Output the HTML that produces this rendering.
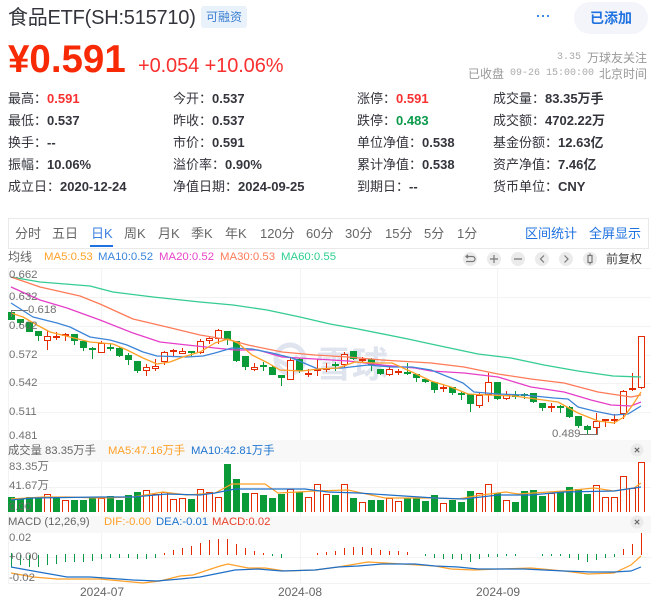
<!DOCTYPE html>
<html><head><meta charset="utf-8"><style>
html,body{margin:0;padding:0;background:#fff}
body{width:651px;height:602px;position:relative;overflow:hidden;font-family:"Liberation Sans","Noto Sans CJK SC",sans-serif;color:#33353c}
.a{position:absolute;white-space:nowrap}
.r{font-size:13px;line-height:18px;color:#33353c}
.r b{font-weight:700}
.red{color:#f93030}.grn{color:#0a9a4a}
.t{font-size:13px;line-height:18px;top:225px;color:#666}
.i{font-size:12px;line-height:16px;color:#999}
.m{font-family:"Liberation Mono",monospace;font-size:10px;color:#aaa}
.ma{top:249px;font-size:11.4px;line-height:16px}
svg{position:absolute;left:0;top:0}
svg text{font-family:"Liberation Sans","Noto Sans CJK SC",sans-serif}
</style></head><body>
<div class="a" style="left:8px;top:5px;font-size:20px;line-height:26px;letter-spacing:-.22px">食品ETF(SH:515710)</div>
<div class="a" style="left:201px;top:6px;width:46px;height:22px;background:#e9f2fb;border-radius:3px;color:#3b7fd0;font-size:12px;line-height:22px;text-align:center">可融资</div>
<div class="a" style="left:8px;top:37px;font-size:38.5px;line-height:46px;font-weight:700;color:#f82a05">¥0.591</div>
<div class="a" style="left:138px;top:53px;font-size:20px;line-height:26px;color:#f93030;letter-spacing:-.1px">+0.054 +10.06%</div>
<div class="a" style="left:574px;top:2px;width:74px;height:32px;border-radius:16px;background:#f3f5fa;color:#1f72e0;font-size:14px;line-height:32px;text-align:center;font-weight:700">已添加</div>
<div class="a i m" style="left:557px;top:50px">3.35</div>
<div class="a i" style="left:587px;top:50px">万球友关注</div>
<div class="a i" style="left:468px;top:66px">已收盘</div>
<div class="a i m" style="left:510px;top:66px">09-26</div>
<div class="a i m" style="left:546px;top:66px">15:00:00</div>
<div class="a i" style="left:599px;top:66px">北京时间</div>

<div class="a r" style="left:8px;top:90px">最高：<b class="red">0.591</b></div>
<div class="a r" style="left:8px;top:112px">最低：<b>0.537</b></div>
<div class="a r" style="left:8px;top:134px">换手：<b>--</b></div>
<div class="a r" style="left:8px;top:156px">振幅：<b>10.06%</b></div>
<div class="a r" style="left:8px;top:178px">成立日：<b>2020-12-24</b></div>
<div class="a r" style="left:173px;top:90px">今开：<b>0.537</b></div>
<div class="a r" style="left:173px;top:112px">昨收：<b>0.537</b></div>
<div class="a r" style="left:173px;top:134px">市价：<b>0.591</b></div>
<div class="a r" style="left:173px;top:156px">溢价率：<b>0.90%</b></div>
<div class="a r" style="left:173px;top:178px">净值日期：<b>2024-09-25</b></div>
<div class="a r" style="left:357px;top:90px">涨停：<b class="red">0.591</b></div>
<div class="a r" style="left:357px;top:112px">跌停：<b class="grn">0.483</b></div>
<div class="a r" style="left:357px;top:134px">单位净值：<b>0.538</b></div>
<div class="a r" style="left:357px;top:156px">累计净值：<b>0.538</b></div>
<div class="a r" style="left:357px;top:178px">到期日：<b>--</b></div>
<div class="a r" style="left:493px;top:90px">成交量：<b>83.35万手</b></div>
<div class="a r" style="left:493px;top:112px">成交额：<b>4702.22万</b></div>
<div class="a r" style="left:493px;top:134px">基金份额：<b>12.63亿</b></div>
<div class="a r" style="left:493px;top:156px">资产净值：<b>7.46亿</b></div>
<div class="a r" style="left:493px;top:178px">货币单位：<b>CNY</b></div>

<div class="a" style="left:8px;top:218px;width:639px;height:29px;border:1px solid #e9e9e9"></div>
<div class="a t" style="left:15px">分时</div><div class="a t" style="left:52px">五日</div>
<div class="a t" style="left:91px;color:#3b7fe0">日K</div>
<div class="a" style="left:90px;top:245px;width:23px;height:2px;background:#1f72e0"></div>
<div class="a t" style="left:124px">周K</div><div class="a t" style="left:158px">月K</div><div class="a t" style="left:191px">季K</div><div class="a t" style="left:225px">年K</div>
<div class="a t" style="left:260px">120分</div><div class="a t" style="left:306px">60分</div><div class="a t" style="left:345px">30分</div><div class="a t" style="left:385px">15分</div><div class="a t" style="left:424px">5分</div><div class="a t" style="left:457px">1分</div>
<div class="a t" style="left:525px;color:#1f72e0">区间统计</div><div class="a t" style="left:589px;color:#1f72e0">全屏显示</div>

<div class="a" style="left:8px;top:249px;font-size:12px;line-height:16px;color:#666">均线</div>
<div class="a ma" style="left:44px;color:#ffa22a">MA5:0.53</div>
<div class="a ma" style="left:98px;color:#3b85dc">MA10:0.52</div>
<div class="a ma" style="left:159px;color:#e845c8">MA20:0.52</div>
<div class="a ma" style="left:220px;color:#ff7b58">MA30:0.53</div>
<div class="a ma" style="left:281px;color:#2fd08f">MA60:0.55</div>
<div class="a" style="left:606px;top:251px;font-size:12px;line-height:16px;color:#444">前复权</div>

<svg width="651" height="602" viewBox="0 0 651 602">
<g fill="#2a7de1"><circle cx="538" cy="16" r="1.1"/><circle cx="543" cy="16" r="1.1"/><circle cx="548" cy="16" r="1.1"/></g>
<g fill="#ebebeb"><circle cx="470" cy="259" r="7"/><circle cx="494" cy="259" r="7"/><circle cx="518" cy="259" r="7"/><circle cx="542" cy="259" r="7"/><circle cx="566" cy="259" r="7"/><circle cx="590" cy="259" r="7"/></g>
<g fill="none" stroke="#777" stroke-width="1.2"><path d="M466 256.5h6.5a2.5 2.5 0 0 1 0 5H466M468 254.8l-2 1.7 2 1.7"/><path d="M490 259h8M494 255v8M514 259h8M544 255.5l-3.5 3.5 3.5 3.5M564.5 255.5l3.5 3.5-3.5 3.5"/><rect x="588" y="255.5" width="4" height="7"/><path d="M590 253.5v2M590 262.5v2"/></g>

<rect x="8" y="440" width="643" height="22" fill="#f8f8f8"/>
<rect x="8" y="516" width="643" height="17" fill="#f8f8f8"/>
<path d="M8.5 268V583M101.5 268V440M300.5 268V440M497.5 268V440M101.5 462V516M300.5 462V516M497.5 462V516M101.5 533V583M300.5 533V583M497.5 533V583M8 268.5H651M8 297.5H651M8 326.5H651M8 355.5H651M8 383.5H651M8 412.5H651M8 487.5H651M8 557.5H651M8 583.5H651" stroke="#f3f3f3" fill="none"/>

<g fill="#dfe4ee" stroke="none"><circle cx="290" cy="359" r="14" fill="none" stroke="#dfe4ee" stroke-width="5"/><path d="M278 358l10 5 8-8 6 4-2 3-4-2-8 8-11-6z"/><text x="316" y="377" font-size="36" font-weight="700">雪球</text></g>

<!-- candles wicks -->
<path fill="none" stroke="#0a9a38" d="M11.5 310V320M20.5 319V325M38.5 331V341M74.5 334V345M83.5 341V351M92.5 347V359M110.5 343V351M119.5 347V357M128.5 353V365M137.5 361V373M191.5 351V356M227.5 331V345M236.5 341V362M245.5 356V370M263.5 362V371M272.5 366V375M281.5 375V386M299.5 358V373M335.5 362V371M353.5 351V360M371.5 358V371M380.5 369V375M407.5 363V375M416.5 374V382M425.5 379V383M434.5 382V393M452.5 387V395M461.5 392V400M470.5 394V412M497.5 382V400M515.5 391V399M524.5 393V399M533.5 393V403M542.5 403V411M560.5 405V413M569.5 406V418M578.5 416V428M587.5 425V434"/>
<path fill="none" stroke="#e32a00" d="M47.5 331V350M56.5 332V340M65.5 333V341M101.5 341V353M146.5 364V376M155.5 359V371M164.5 351V365M173.5 349V356M182.5 348V354M200.5 339V354M209.5 336V344M218.5 329V344M254.5 363V371M290.5 358V380M308.5 369V377M317.5 359V376M326.5 363V372M344.5 352V368M362.5 357V363M389.5 366V376M398.5 369V375M443.5 385V392M479.5 393V408M488.5 373V402M506.5 391V400M551.5 403V412M596.5 413V434M605.5 419V427M614.5 414V424M623.5 390V419M632.5 373V391M641.5 336V389"/>
<!-- green bodies -->
<path fill="#0a9a38" d="M8 312h7v8h-7zM17 319h7v4h-7zM26 322h7v10h-7zM35 331h7v5h-7zM71 334h7v7h-7zM80 341h7v7h-7zM89 348h7v2h-7zM107 347h7v2h-7zM116 348h7v8h-7zM125 355h7v5h-7zM134 361h7v10h-7zM188 351h7v2h-7zM224 331h7v9h-7zM233 341h7v20h-7zM242 356h7v11h-7zM260 365h7v2h-7zM269 367h7v8h-7zM278 375h7v3h-7zM296 359h7v12h-7zM332 364h7v2h-7zM350 351h7v8h-7zM368 359h7v6h-7zM377 369h7v5h-7zM404 372h7v2h-7zM413 374h7v4h-7zM422 379h7v3h-7zM431 382h7v8h-7zM449 387h7v6h-7zM458 393h7v2h-7zM467 394h7v10h-7zM494 382h7v17h-7zM512 395h7v2h-7zM521 394h7v2h-7zM530 393h7v9h-7zM539 403h7v5h-7zM557 406h7v2h-7zM566 407h7v10h-7zM575 416h7v10h-7zM584 426h7v4h-7z"/>
<!-- red filled -->
<path fill="#e32a00" d="M53 336h7v2h-7zM62 334h7v2h-7zM170 350h7v2h-7zM305 373h7v2h-7zM323 368h7v2h-7zM359 359h7v2h-7zM395 371h7v2h-7zM548 406h7v2h-7zM602 419h7v2h-7zM611 419h7v2h-7zM629 388h7v2h-7z"/>
<!-- red hollow -->
<path fill="#fff" stroke="#e32a00" d="M44.5 336.5h6v4h-6zM98.5 343.5h6v9h-6zM143.5 367.5h6v3h-6zM152.5 366.5h6v2h-6zM161.5 352.5h6v9h-6zM179.5 351.5h6v2h-6zM197.5 341.5h6v11h-6zM206.5 338.5h6v2h-6zM215.5 330.5h6v8h-6zM251.5 367.5h6v2h-6zM287.5 360.5h6v19h-6zM314.5 369.5h6v1h-6zM341.5 354.5h6v10h-6zM386.5 369.5h6v5h-6zM440.5 387.5h6v1h-6zM476.5 395.5h6v10h-6zM485.5 382.5h6v12h-6zM503.5 395.5h6v3h-6zM593.5 421.5h6v6h-6zM620.5 391.5h6v22h-6zM638.5 336.5h6v51h-6z"/>

<g fill="none" stroke-width="1.3" stroke-linejoin="round">
<polyline stroke="#35cc92" points="11,277 40,282 90,286 113,292 153,297 200,302 233,305 267,310 300,317 330,324 358,329 408,339 431,344 478,354 511,358 544,365 578,371 613,376 641,377"/>
<polyline stroke="#ff7b58" points="11,277 40,287 80,296 100,304 133,319 167,327 200,335 230,340 248,345 282,352 315,355 348,357 382,360 431,363 464,367 498,374 531,379 564,383 598,392 631,397 641,395"/>
<polyline stroke="#e53fc8" points="11,287 40,300 67,308 100,320 133,333 160,342 187,345 215,348 235,350 258,350 282,357 315,359 348,361 382,365 415,368 431,371 464,373 498,377 531,387 564,392 591,400 611,405 631,406 641,402"/>
<polyline stroke="#3d85d8" points="11,303 33,317 57,323 70,327 90,337 110,340 127,345 143,352 157,356 187,357 203,356 215,353 232,348 252,349 272,353 292,358 318,369 342,368 368,365 392,367 412,367 431,370 451,378 463,383 474,392 498,394 524,395 554,398 568,399 578,407 594,411 614,415 628,414 641,406"/>
<polyline stroke="#ffa028" points="11,313 23,317 37,325 50,332 70,337 90,342 113,344 127,350 143,358 157,364 170,362 183,357 200,352 215,343 228,339 238,343 252,355 268,363 280,370 302,371 318,369 338,368 355,362 375,363 392,363 412,372 431,381 451,387 468,394 488,395 514,396 558,402 578,413 598,421 614,423 624,417 634,403 641,392"/>
</g>
<path d="M11.5 317V310.5H28M580 434.5H597.5V428" fill="none" stroke="#777"/>
<g fill="#666" font-size="11.4" opacity=".92"><text x="9" y="278">0.662</text><text x="9" y="300">0.632</text><text x="28" y="313">0.618</text><text x="9" y="329">0.602</text><text x="9" y="358">0.572</text><text x="9" y="386">0.542</text><text x="9" y="415">0.511</text><text x="9" y="439">0.481</text><text x="552" y="437">0.489</text></g>

<!-- volume -->
<g font-size="11.3"><text x="8" y="454" fill="#666">成交量 83.35万手</text><text x="108" y="454" fill="#ffa028">MA5:47.16万手</text><text x="191" y="454" fill="#1e74d0">MA10:42.81万手</text></g>
<path fill="#0a9a38" d="M8 497h7V512h-7zM17 498h7V512h-7zM26 497h7V512h-7zM35 497h7V512h-7zM53 497h7V512h-7zM71 500h7V512h-7zM80 500h7V512h-7zM89 498h7V512h-7zM107 496h7V512h-7zM116 500h7V512h-7zM125 495h7V512h-7zM134 492h7V512h-7zM188 499h7V512h-7zM224 464h7V512h-7zM233 479h7V512h-7zM242 493h7V512h-7zM260 495h7V512h-7zM269 498h7V512h-7zM278 494h7V512h-7zM296 492h7V512h-7zM332 495h7V512h-7zM350 498h7V512h-7zM368 500h7V512h-7zM377 500h7V512h-7zM404 498h7V512h-7zM413 498h7V512h-7zM422 501h7V512h-7zM431 495h7V512h-7zM449 500h7V512h-7zM458 502h7V512h-7zM467 491h7V512h-7zM494 493h7V512h-7zM512 502h7V512h-7zM521 491h7V512h-7zM530 490h7V512h-7zM539 496h7V512h-7zM557 491h7V512h-7zM566 487h7V512h-7zM575 489h7V512h-7zM584 494h7V512h-7z"/>
<path fill="none" stroke="#e32a00" d="M44.5 512V494.5h6V512M62.5 512V500.5h6V512M98.5 512V498.5h6V512M143.5 512V490.5h6V512M152.5 512V494.5h6V512M161.5 512V492.5h6V512M170.5 512V499.5h6V512M179.5 512V498.5h6V512M197.5 512V489.5h6V512M206.5 512V492.5h6V512M215.5 512V497.5h6V512M251.5 512V493.5h6V512M287.5 512V489.5h6V512M305.5 512V497.5h6V512M314.5 512V484.5h6V512M323.5 512V494.5h6V512M341.5 512V484.5h6V512M359.5 512V502.5h6V512M386.5 512V498.5h6V512M395.5 512V501.5h6V512M440.5 512V503.5h6V512M476.5 512V493.5h6V512M485.5 512V484.5h6V512M503.5 512V500.5h6V512M548.5 512V493.5h6V512M593.5 512V485.5h6V512M602.5 512V497.5h6V512M611.5 512V497.5h6V512M620.5 512V476.5h6V512M629.5 512V488.5h6V512M638.5 512V462.5h6V512"/>
<g fill="none" stroke-width="1.2"><polyline stroke="#ffa028" points="11,499 43,497 67,497 100,498 133,497 163,492 187,495 215,493 232,484 265,484 278,493 298,492 315,491 348,490 385,498 415,498 435,498 458,499 481,495 506,492 518,494 564,491 594,488 614,491 634,488 641,483"/><polyline stroke="#1e6fc8" points="11,500 33,498 100,497 133,497 167,494 200,495 215,493 235,489 305,489 328,492 358,493 435,498 464,499 498,495 531,495 564,492 614,491 641,487"/></g>
<g fill="#666" font-size="11.4" opacity=".92"><text x="9" y="470">83.35万</text><text x="9" y="489">41.67万</text><text x="9" y="510">0.00</text></g>

<!-- MACD -->
<g font-size="11.3"><text x="8" y="525" fill="#666">MACD (12,26,9)</text><text x="104" y="525" fill="#ffa028">DIF:-0.00</text><text x="156" y="525" fill="#1e74d0">DEA:-0.01</text><text x="212" y="525" fill="#e8402a">MACD:0.02</text></g>
<path fill="none" stroke="#0a9a4a" d="M11.5 553V567M20.5 555V565M29.5 555V567M38.5 555V567M47.5 554V565M56.5 555V564M65.5 554V562M74.5 554V562M83.5 554V562M92.5 554V561M101.5 554V559M110.5 554V558M119.5 554V558M128.5 554V558M137.5 554V559M146.5 554V559M155.5 554V558M272.5 554V556M281.5 554V558M425.5 554V556M434.5 554V558M443.5 554V559M452.5 554V559M461.5 554V560M470.5 554V562M479.5 554V559M488.5 554V557M497.5 554V557M506.5 554V556M515.5 554V556M542.5 554V556M551.5 554V556M560.5 554V556M569.5 554V558M578.5 554V560M587.5 554V562M596.5 554V560M605.5 554V558M614.5 554V557"/>
<path fill="none" stroke="#e32a00" d="M164.5 553V555M173.5 550V555M182.5 548V555M191.5 546V555M200.5 543V555M209.5 540V555M218.5 539V555M227.5 539V555M236.5 544V555M245.5 548V555M254.5 551V555M263.5 553V555M317.5 553V555M326.5 552V555M335.5 551V555M344.5 548V555M353.5 547V555M362.5 547V555M371.5 548V555M380.5 550V555M389.5 551V555M398.5 551V555M407.5 552V555M623.5 549V555M632.5 544V555M641.5 533V555"/>
<g fill="none" stroke-width="1.2"><polyline stroke="#ffa028" points="11,573 33,577 57,579 100,579 143,583 160,581 180,576 193,575 220,566 228,564 248,568 265,568 285,571 315,570 338,567 368,562 402,564 435,566 451,569 474,570 498,569 531,568 564,571 588,574 614,573 631,565 641,556"/><polyline stroke="#1e6fc8" points="11,567 33,571 67,577 90,577 133,580 157,581 180,579 200,577 220,573 235,570 258,569 282,571 315,570 338,567 358,566 382,564 415,564 435,566 458,567 478,569 524,569 564,571 591,572 614,572 631,571 641,567"/></g>
<g fill="#666" font-size="11.4" opacity=".92"><text x="9" y="541">0.02</text><text x="9" y="560">+0.00</text><text x="9" y="581">-0.02</text></g>
<g fill="#666" font-size="12"><text x="80" y="596">2024-07</text><text x="278" y="596">2024-08</text><text x="476" y="596">2024-09</text></g>

<g fill="#ebebeb"><circle cx="637" cy="450" r="6.5"/><circle cx="637" cy="522" r="6.5"/></g>
<path d="M634.8 447.8l4.4 4.4M639.2 447.8l-4.4 4.4M634.8 519.8l4.4 4.4M639.2 519.8l-4.4 4.4" stroke="#666" stroke-width="1.1" fill="none"/>
</svg>
</body></html>
